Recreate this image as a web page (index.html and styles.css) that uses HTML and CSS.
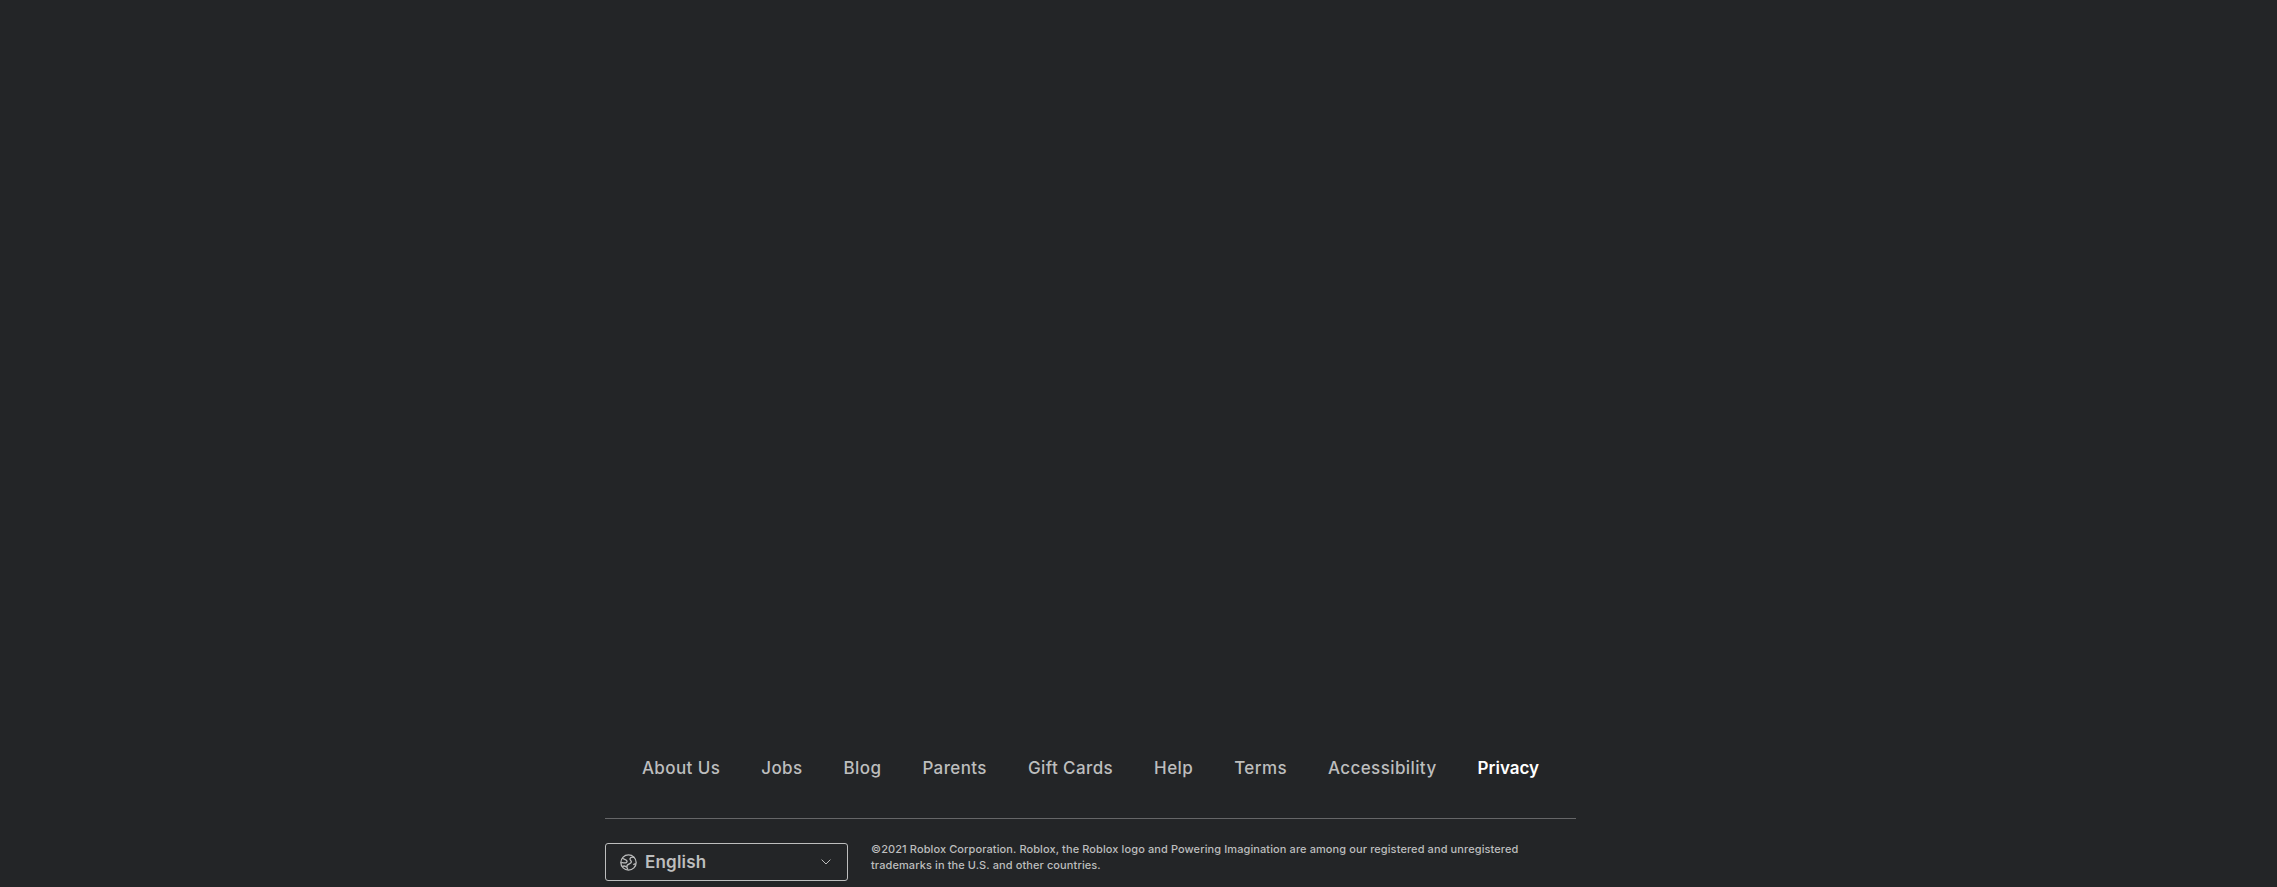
FILE: index.html
```html
<!DOCTYPE html>
<html lang="en">
<head>
  <meta charset="UTF-8" />
  <meta name="viewport" content="width=device-width, initial-scale=1.0"/>
  <title>Roblox</title>
  <link rel="stylesheet" href="styles.css">
</head>
<body>
  <div class="content"></div>

  <footer class="footer">
    <ul class="footer-links">
      <li><a href="#">About Us</a></li>
      <li><a href="#">Jobs</a></li>
      <li><a href="#">Blog</a></li>
      <li><a href="#">Parents</a></li>
      <li><a href="#">Gift Cards</a></li>
      <li><a href="#">Help</a></li>
      <li><a href="#">Terms</a></li>
      <li><a href="#">Accessibility</a></li>
      <li><a href="#" class="privacy">Privacy</a></li>
    </ul>

    <div class="footer-bottom">
      <div class="language-select">
        <svg class="globe" viewBox="0 0 16 16" width="17" height="17" aria-hidden="true">
          <circle cx="8" cy="8" r="7.2"/>
          <path d="M2.200 4c1.700 1.200 3.300 1 4.200 2.200.8 1.100-.5 2.200-1.800 2.200-1.400 0-2.800-.6-3.800.1"/>
          <path d="M13.400 3.200c-1.800-.4-3.600 0-4 1.200-.4 1.200 1.300 1.900 1.300 3.200 0 1.400-2.900 1.700-3.900 3-.6.800-.3 2.400.6 4"/>
          <path d="M2.400 11.600c1.500-.6 3-.1 3.900 1"/>
          <path d="M14.800 9.400c-.9-.2-1.700.2-2.100 1"/>
        </svg>
        <span class="language-name">English</span>
        <svg class="chevron" viewBox="0 0 10 6" width="10" height="6" aria-hidden="true">
          <path d="M.6.6 5 5 9.400.6"/>
        </svg>
      </div>
      <p class="copyright">©2021 Roblox Corporation. Roblox, the Roblox logo and Powering Imagination are among our registered and unregistered trademarks in the U.S. and other countries.</p>
    </div>
  </footer>
</body>
</html>
```

FILE: styles.css
```css
* {
  margin: 0;
  padding: 0;
  box-sizing: border-box;
}

html, body {
  height: 100%;
}

body {
  display: flex;
  flex-direction: column;
  overflow: hidden;
  background-color: #232527;
  color: #bdbebe;
  font-family: Inter, 'Noto Sans', sans-serif;
}

.content {
  flex-grow: 1;
}

.footer {
  width: 971px;
  margin-left: 605px;
  padding-bottom: 6px;
}

.footer-links {
  display: flex;
  justify-content: center;
  list-style: none;
  padding-bottom: 38px;
  border-bottom: 1px solid #656668;
}

.footer-links li {
  padding: 0 20.500px;
}

.footer-links a {
  display: block;
  font-size: 17px;
  font-weight: 500;
  line-height: 24px;
  letter-spacing: 0.4px;
  color: #bdbebe;
  text-decoration: none;
}

.footer-links a.privacy {
  color: #fff;
  font-weight: 600;
  letter-spacing: 0;
}

.footer-bottom {
  display: flex;
  align-items: flex-start;
  gap: 23px;
  padding-top: 22px;
}

.language-select {
  display: flex;
  align-items: center;
  flex-shrink: 0;
  width: 243px;
  height: 38px;
  margin-top: 2px;
  padding: 0 16px 0 14px;
  border: 1px solid #bdbebe;
  border-radius: 3px;
}

.globe {
  fill: none;
  stroke: #bdbebe;
  stroke-width: 1.200;
}

.language-name {
  margin-left: 8px;
  font-size: 17px;
  font-weight: 600;
  letter-spacing: 0.2px;
}

.chevron {
  margin-left: auto;
  fill: none;
  stroke: #bdbebe;
  stroke-width: 1;
}

.copyright {
  width: 680px;
  font-size: 11px;
  font-weight: 500;
  line-height: 16px;
  letter-spacing: 0.1px;
}
```
